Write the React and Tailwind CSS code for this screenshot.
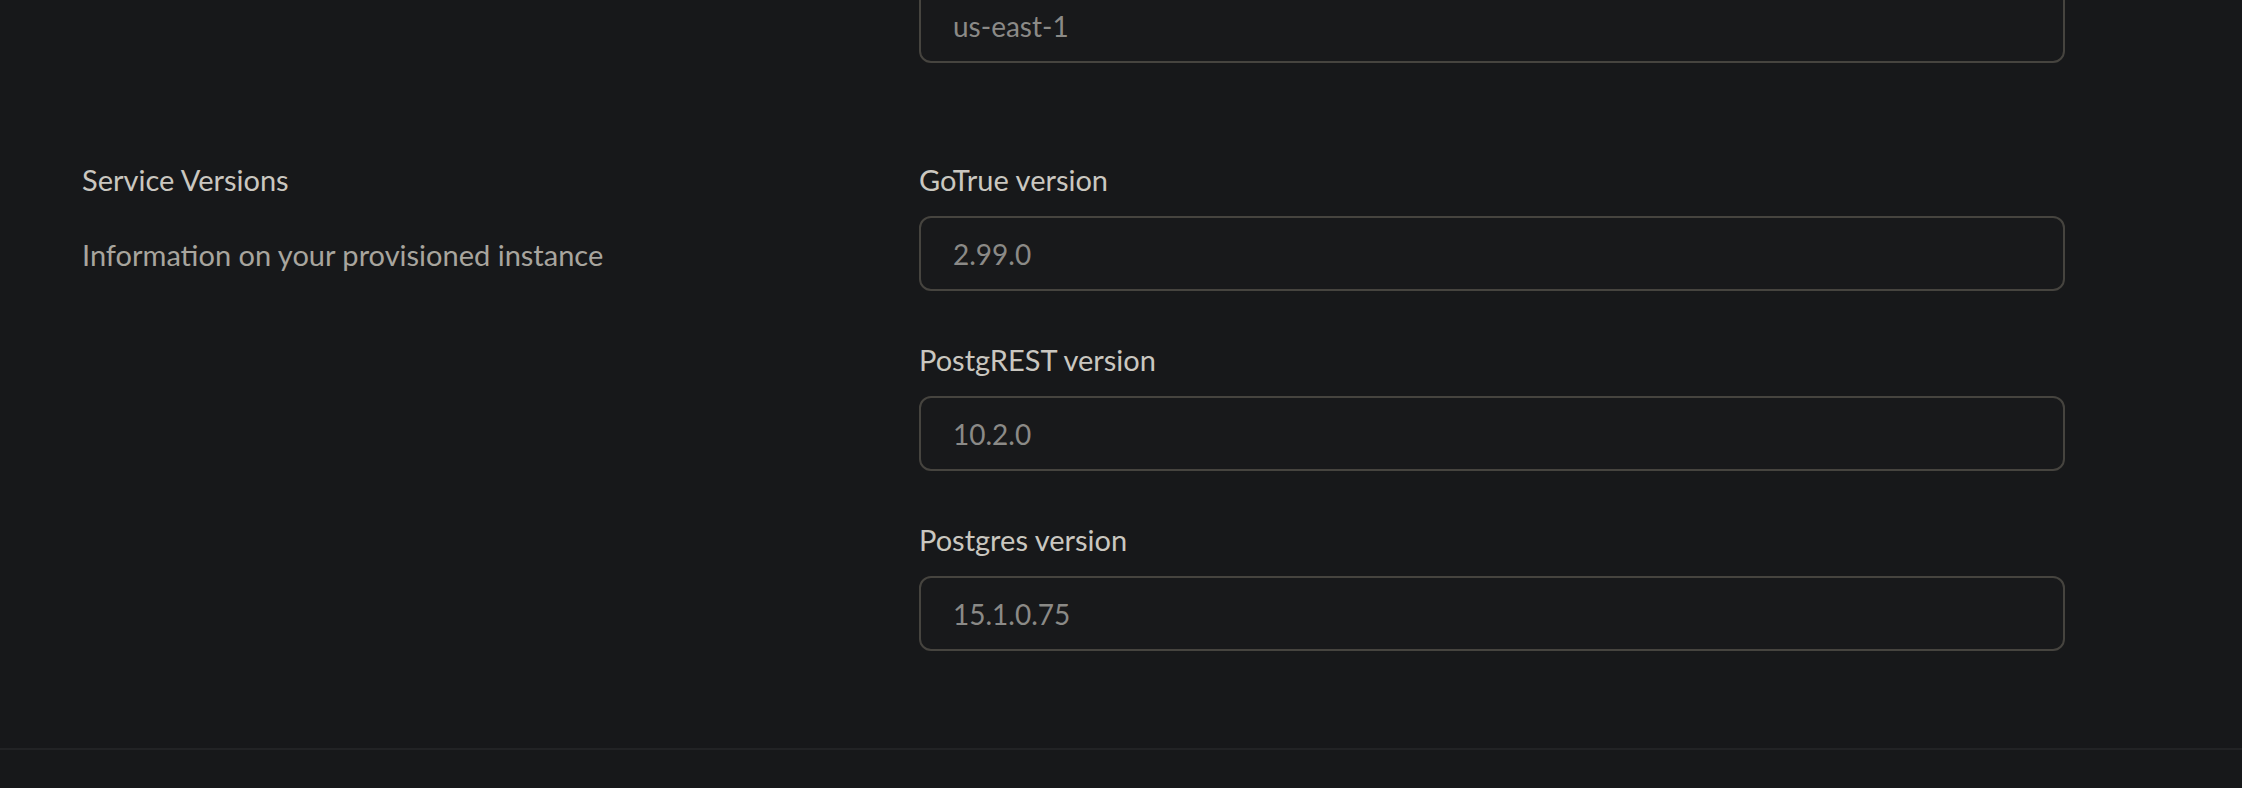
import React from 'react';

const versions = [
  { label: 'GoTrue version', value: '2.99.0' },
  { label: 'PostgREST version', value: '10.2.0' },
  { label: 'Postgres version', value: '15.1.0.75' },
];

function ReadOnlyInput({ value }) {
  return (
    <input
      readOnly
      value={value}
      className="block w-full h-[75px] rounded-[12px] border-2 border-[#46443f] bg-[#18191b] px-[32px] text-[28px] text-[#8b8a87] outline-none"
    />
  );
}

export default function App() {
  return (
    <div className="min-h-[788px] bg-[#17181a] font-['Lato',sans-serif] overflow-hidden">
      <div className="flex pl-[82px] -mt-[12px]">
        <div className="w-[837px]" />
        <div className="w-[1146px]">
          <ReadOnlyInput value="us-east-1" />
        </div>
      </div>

      <div className="flex pl-[82px] pt-[97px] pb-[97px] border-b-2 border-[#222325]">
        <div className="w-[837px] flex flex-col gap-[35px] text-[29px] leading-[40px]">
          <div className="text-[#cac7c0]">Service Versions</div>
          <div className="text-[#a8a59e]">Information on your provisioned instance</div>
        </div>
        <div className="w-[1146px] flex flex-col gap-[49px]">
          {versions.map((v) => (
            <div key={v.label} className="flex flex-col gap-[16px]">
              <label className="text-[29px] leading-[40px] text-[#cac7c0]">{v.label}</label>
              <ReadOnlyInput value={v.value} />
            </div>
          ))}
        </div>
      </div>
    </div>
  );
}
